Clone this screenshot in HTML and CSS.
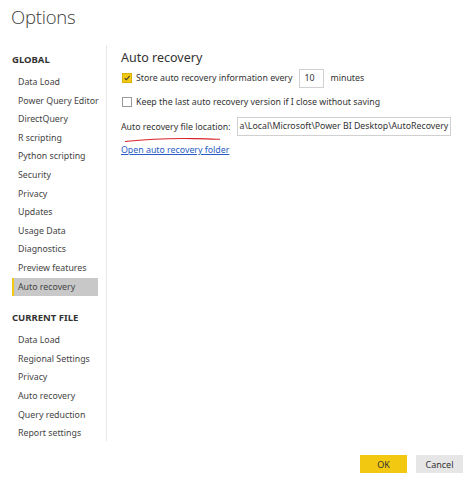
FILE: index.html
```html
<!DOCTYPE html>
<html>
<head>
<meta charset="utf-8">
<link rel="stylesheet" href="styles.css">
</head>
<body>
<div class="dialog">
  <h1 class="title">Options</h1>
  <div class="main">
    <nav class="sidebar">
      <div class="group-title">GLOBAL</div>
      <ul class="nav-list">
        <li class="nav-item">Data Load</li>
        <li class="nav-item">Power Query Editor</li>
        <li class="nav-item">DirectQuery</li>
        <li class="nav-item">R scripting</li>
        <li class="nav-item">Python scripting</li>
        <li class="nav-item">Security</li>
        <li class="nav-item">Privacy</li>
        <li class="nav-item">Updates</li>
        <li class="nav-item">Usage Data</li>
        <li class="nav-item">Diagnostics</li>
        <li class="nav-item">Preview features</li>
        <li class="nav-item active">Auto recovery</li>
      </ul>
      <div class="group-title group-second">CURRENT FILE</div>
      <ul class="nav-list">
        <li class="nav-item">Data Load</li>
        <li class="nav-item">Regional Settings</li>
        <li class="nav-item">Privacy</li>
        <li class="nav-item">Auto recovery</li>
        <li class="nav-item">Query reduction</li>
        <li class="nav-item">Report settings</li>
      </ul>
    </nav>
    <section class="content">
      <h2 class="section-title">Auto recovery</h2>
      <div class="row row-store">
        <span class="checkbox checked">
          <svg viewBox="0 0 10 10" width="10" height="10"><path d="M2 5.2 L4.1 7.3 L8.2 2.6" fill="none" stroke="#333" stroke-width="1.3"/></svg>
        </span>
        <span class="label">Store auto recovery information every</span>
        <span class="num-input">10</span>
        <span class="label">minutes</span>
      </div>
      <div class="row row-keep">
        <span class="checkbox"></span>
        <span class="label">Keep the last auto recovery version if I close without saving</span>
      </div>
      <div class="row row-location">
        <span class="label">Auto recovery file location:</span>
        <span class="path-input">a\Local\Microsoft\Power BI Desktop\AutoRecovery</span>
        <svg class="scribble" viewBox="0 0 100 6" width="100" height="6"><path d="M1 4.5 C 20 2.5, 45 1.2, 70 1.6 S 92 2.4, 96 2.2" fill="none" stroke="#d9232b" stroke-width="1.1"/></svg>
      </div>
      <a class="link" href="#">Open auto recovery folder</a>
    </section>
  </div>
  <div class="footer">
    <button class="btn btn-ok">OK</button>
    <button class="btn btn-cancel">Cancel</button>
  </div>
</div>
</body>
</html>
```

FILE: styles.css
```css
* { box-sizing: border-box; }
html, body { margin: 0; padding: 0; background: #fff; }
body {
  font-family: "Noto Sans", "Open Sans", sans-serif;
  color: #333;
  width: 474px;
  height: 485px;
  overflow: hidden;
}
.dialog {
  display: flex;
  flex-direction: column;
  height: 485px;
}
.title {
  margin: 0;
  padding: 4px 0 0 11px;
  height: 45px;
  font-weight: 300;
  font-size: 18.5px;
  line-height: 26px;
  letter-spacing: -0.2px;
  color: #3a3a3a;
  font-family: "Open Sans", "Noto Sans", sans-serif;
}
.main {
  display: flex;
  height: 396px;
}
.sidebar {
  width: 107px;
  border-right: 1px solid #e8e8e8;
  padding: 8px 8px 0 12px;
}
.group-title {
  font-size: 9.5px;
  font-weight: 700;
  color: #333;
  height: 20px;
  line-height: 14px;
}
.group-second { margin-top: 15px; }
.nav-list {
  list-style: none;
  margin: 0;
  padding: 0;
}
.nav-item {
  font-size: 8.8px;
  height: 18.6px;
  line-height: 18.6px;
  padding-left: 6px;
  color: #444;
  white-space: nowrap;
}
.nav-item.active {
  background: #c8c8c8;
  border-left: 2px solid #f2c811;
  padding-left: 4px;
}
.content {
  flex: 1;
  padding: 4px 24px 0 14px;
}
.section-title {
  margin: 0;
  font-weight: 400;
  font-size: 12.5px;
  line-height: 18px;
  height: 19px;
  color: #333;
}
.row {
  display: flex;
  align-items: center;
  font-size: 8.8px;
  color: #333;
  white-space: nowrap;
}
.row-store { height: 20px; margin-top: 0; }
.row-keep { height: 16px; margin-top: 6px; }
.row-location { height: 19px; margin-top: 7px; position: relative; }
.checkbox {
  width: 10px;
  height: 10px;
  border: 1px solid #999;
  margin: 0 4px 0 1px;
  display: inline-flex;
  align-items: center;
  justify-content: center;
  background: #fff;
  flex: none;
}
.checkbox svg { display: block; }
.checkbox.checked {
  background: #f2c811;
  border-color: #d9b00a;
}
.num-input {
  width: 25px;
  height: 19px;
  border: 1px solid #d0d0d0;
  margin: 0 7px 0 6px;
  padding-left: 5px;
  line-height: 17px;
}
.path-input {
  flex: 1;
  border: 1px solid #d0d0d0;
  height: 19px;
  line-height: 17px;
  padding: 0 2px;
  margin-left: 6px;
  overflow: hidden;
}
.scribble {
  position: absolute;
  left: 3px;
  top: 20px;
}
.link {
  display: inline-block;
  margin-top: 5px;
  font-size: 8.8px;
  color: #2a5cc4;
  text-decoration: underline;
}
.footer {
  display: flex;
  justify-content: flex-end;
  gap: 9px;
  padding: 14px 11px 0 0;
}
.btn {
  font-family: "Noto Sans", "Open Sans", sans-serif;
  font-size: 9px;
  border: none;
  width: 47px;
  height: 18px;
  padding: 0;
  color: #333;
}
.btn-ok { background: #f2c811; }
.btn-cancel { background: #e6e6e6; }
```
